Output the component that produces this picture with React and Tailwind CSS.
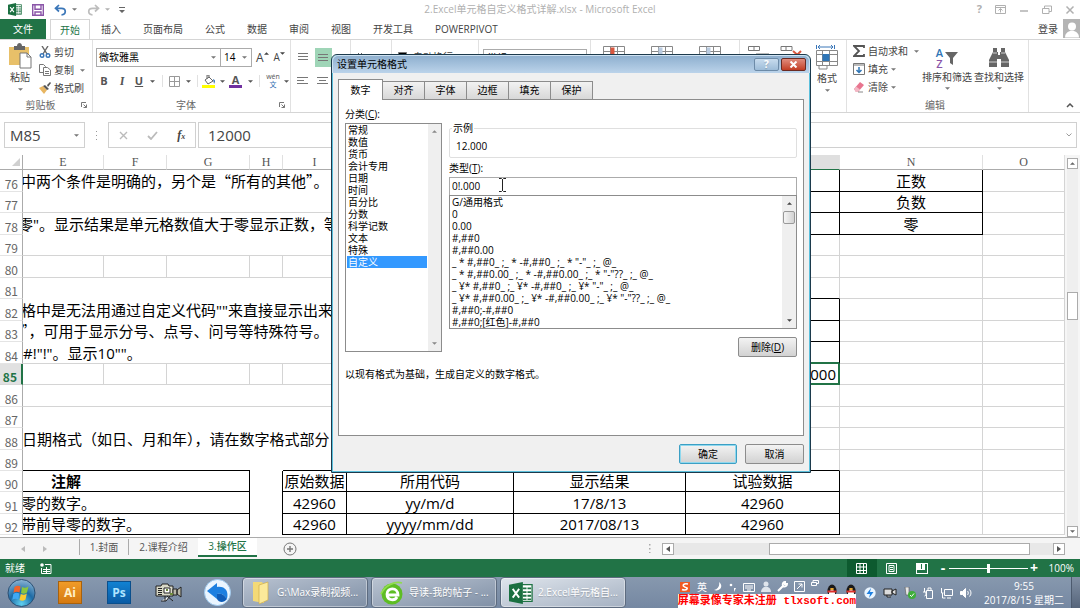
import React, { useState } from 'react';

const Arrow = ({ className = '', up = false }) => (
    <svg className={`h-[3px] w-[5px] shrink-0 ${className}`} viewBox="0 0 6 3" fill="currentColor">
        <path d={up ? 'M0 3h6L3 0z' : 'M0 0h6L3 3z'} />
    </svg>
);

const ExcelLogo = ({ className }) => (
    <svg className={className} viewBox="0 0 26 24">
        <path d="M13 3h12v18H13z" fill="#fff" stroke="#217346" strokeWidth="1.4" />
        <path d="M15 6h4v2h-4zM20 6h4v2h-4zM15 10h4v2h-4zM20 10h4v2h-4zM15 14h4v2h-4zM20 14h4v2h-4zM15 18h4v1.500h-4zM20 18h4v1.500h-4z" fill="#217346" />
        <path d="M0 3L15 0v24L0 21z" fill="#1b7041" />
        <path d="M4 7.500l7 9.500M11 7.500L4 17" stroke="#fff" strokeWidth="2" />
    </svg>
);

const TitleBar = () => (
    <header className="flex h-[19px] items-center text-[#b0b0b0]">
        <div className="flex w-[340px] items-center pl-2">
            <ExcelLogo className="h-[13px] w-[14px]" />
            <button aria-label="保存" className="ml-[10px]">
                <svg className="h-[12px] w-[12px]" viewBox="0 0 12 12" fill="none" stroke="#8a55a8" strokeWidth="1.4">
                    <path d="M.7.7h10.600v10.600H.7zM3 .7v4.600h6V.7M3 11.300V8h6v3.300" />
                </svg>
            </button>
            <button aria-label="撤消" className="ml-[10px] flex items-center">
                <svg className="h-[12px] w-[13px]" viewBox="0 0 13 12" fill="none" stroke="#3a76b8" strokeWidth="1.7">
                    <path d="M5 1L1.500 4.300 5 7.500M2 4.300h5.500c5 0 5 6.500 0 6.500" />
                </svg>
                <Arrow className="ml-[5px] text-[#777]" />
            </button>
            <button aria-label="恢复" className="ml-[10px] flex items-center">
                <svg className="h-[12px] w-[13px]" viewBox="0 0 13 12" fill="none" stroke="#bdbdbd" strokeWidth="1.7">
                    <path d="M8 1l3.500 3.300L8 7.500M11 4.300H5.500c-5 0-5 6.500 0 6.500" />
                </svg>
                <Arrow className="ml-[5px]" />
            </button>
            <button aria-label="自定义快速访问工具栏" className="ml-[9px] text-[#666]">
                <svg className="h-[6px] w-[6px]" viewBox="0 0 6 6" fill="currentColor">
                    <path d="M0 0h6v1H0zM0 3h6L3 6z" />
                </svg>
            </button>
        </div>
        <h1 className="flex-1 text-center text-[10px]">2.Excel单元格自定义格式详解.xlsx - Microsoft Excel</h1>
        <div className="flex w-[340px] items-center justify-end gap-[13px] pr-[5px]">
            <button aria-label="帮助" className="text-[11px] font-bold">?</button>
            <button aria-label="功能区显示选项">
                <svg className="h-[9px] w-[11px]" viewBox="0 0 11 9" fill="none" stroke="currentColor">
                    <path d="M.5.500h10v8H.5zM.5 2.500h10M5.500 7.500V4M3.500 5.500l2-2 2 2" />
                </svg>
            </button>
            <button aria-label="最小化">
                <svg className="h-[10px] w-[10px]" viewBox="0 0 10 10" stroke="currentColor" strokeWidth="1.500"><path d="M1 6h8" /></svg>
            </button>
            <button aria-label="向下还原">
                <svg className="h-[10px] w-[10px]" viewBox="0 0 10 10" fill="none" stroke="currentColor"><path d="M.5 3.500h6.500v5H.5zM2.500 3V1h7v5.500H7" /></svg>
            </button>
            <button aria-label="关闭">
                <svg className="h-[10px] w-[10px]" viewBox="0 0 10 10" stroke="currentColor" strokeWidth="1.500"><path d="M1.500 1.500l7 7M8.500 1.500l-7 7" /></svg>
            </button>
        </div>
    </header>
);

const TABS = ['插入', '页面布局', '公式', '数据', '审阅', '视图', '开发工具', 'POWERPIVOT'];

const RibbonTabs = () => (
    <nav className="flex h-[20px] items-stretch text-[10px] text-[#444]">
        <button className="w-[46px] bg-[#217346] text-white">文件</button>
        <button className="-mb-px ml-1 w-[40px] border border-b-0 border-[#d5d5d5] bg-white text-[#217346]">开始</button>
        {TABS.map((tab) => (
            <button key={tab} className="px-[11px]">{tab}</button>
        ))}
        <button className="mr-[5px] ml-auto">登录</button>
        <div className="mb-px w-[17px] bg-[#b4b4b4]">
            <svg className="h-full w-full" viewBox="0 0 17 18" fill="#fff">
                <circle cx="9" cy="7" r="4" />
                <path d="M2 18c0-9 14-9 14 0z" />
            </svg>
        </div>
    </nav>
);

const Group = ({ label, launcher, className, children }) => (
    <section className={`flex shrink-0 flex-col border-r border-[#e1e1e1] ${className}`}>
        <div className="h-[59px]">{children}</div>
        <div className="flex h-[14px] items-center pr-[5px] text-[10px] text-[#666]">
            <span className="flex-1 text-center">{label}</span>
            {launcher && (
                <svg className="h-[6px] w-[6px]" viewBox="0 0 6 6" fill="none" stroke="#777">
                    <path d="M.5 5V.5H5M2.500 2.500l3 3M5.500 2.500v3h-3" />
                </svg>
            )}
        </div>
    </section>
);

const Lines = ({ d }) => (
    <svg className="h-[12px] w-[12px]" viewBox="0 0 12 12" stroke="#777" strokeWidth="1"><path d={d} /></svg>
);

const CellsIcon = ({ accent = '#b9cbe0' }) => (
    <svg className="h-[16px] w-[22px]" viewBox="0 0 22 16" fill="#fff" stroke="#888">
        <path d="M.5.500h21v15H.5zM.5 5.500h21M.5 10.500h21M7.500 0v16M14.500 0v16" />
        <path d="M7.500 1.500h4v9h-4z" fill={accent} stroke="none" />
    </svg>
);

const Ribbon = () => (
    <div className="flex h-[74px] border-y border-[#d5d5d5] text-[10px] text-[#444]">
        <Group label="剪贴板" launcher className="w-[93px]">
            <div className="flex pt-[3px] pl-[9px]">
                <button className="flex w-[22px] flex-col items-center">
                    <svg className="h-[26px] w-[24px]" viewBox="0 0 24 26">
                        <path d="M1 4h20v18H1z" fill="#e8c069" />
                        <path d="M6 3h3c0-4 5-4 5 0h3v4H6z" fill="#666" />
                        <path d="M12 10h7l4 4v11H12z" fill="#fff" stroke="#777" />
                        <path d="M19 10v4h4" fill="none" stroke="#777" />
                    </svg>
                    <span className="leading-[16px] whitespace-nowrap">粘贴</span>
                    <Arrow className="mt-[3px] text-[#777]" />
                </button>
                <div className="ml-[8px] flex flex-col leading-[18px]">
                    <button className="flex items-center gap-[3px]">
                        <svg className="h-[12px] w-[12px]" viewBox="0 0 12 12" fill="none" strokeWidth="1.400">
                            <path d="M3 0l5 8M9 0L4 8" stroke="#666" />
                            <circle cx="3" cy="9.500" r="1.800" stroke="#3a76b8" />
                            <circle cx="9" cy="9.500" r="1.800" stroke="#3a76b8" />
                        </svg>
                        剪切
                    </button>
                    <button className="flex items-center gap-[3px]">
                        <svg className="h-[12px] w-[12px]" viewBox="0 0 12 12" fill="#fff" stroke="#777">
                            <path d="M.5.500h4l2 2v6h-6z" />
                            <path d="M4.500 3.500h4l3 2.500v5.500h-7zM6 7.500h4M6 9.500h4" />
                        </svg>
                        复制
                        <Arrow className="ml-[3px] text-[#777]" />
                    </button>
                    <button className="flex items-center gap-[3px]">
                        <svg className="h-[12px] w-[12px]" viewBox="0 0 12 12">
                            <path d="M0 6l4-2 4 4-3 4z" fill="#e8b662" />
                            <path d="M4 4l2-1 4 4-2 1zM8 3l3-3 1 1-3 4z" fill="#555" />
                        </svg>
                        格式刷
                    </button>
                </div>
            </div>
        </Group>

        <Group label="字体" launcher className="w-[198px]">
            <div className="flex items-center pt-2 pl-[3px]">
                <button className="flex h-[19px] w-[125px] items-center justify-between border border-[#ababab] pr-1 pl-[2px] text-[10px] text-black">
                    微软雅黑 <Arrow className="text-[#777]" />
                </button>
                <button className="-ml-px flex h-[19px] w-[32px] items-center justify-between border border-[#ababab] pr-1 pl-[3px] text-[10px] text-black">
                    14 <Arrow className="text-[#777]" />
                </button>
                <button aria-label="增大字号" className="ml-1 flex text-[12px]">A<Arrow up className="mt-[3px]" /></button>
                <button aria-label="减小字号" className="ml-[5px] flex text-[10px]">A<Arrow className="mt-[2px]" /></button>
            </div>
            <div className="mt-[3px] flex h-[22px] items-center pl-[5px] text-[#555]">
                <button className="w-[12px] text-[11px] font-bold">B</button>
                <button className="ml-[6px] w-[12px] font-serif text-[12px] font-bold italic">I</button>
                <button className="ml-[5px] w-[12px] text-[11px] font-bold underline">U</button>
                <Arrow className="ml-[5px]" />
                <div className="ml-[7px] h-3 w-px bg-[#e1e1e1]" />
                <svg className="ml-[6px] h-[11px] w-[11px]" viewBox="0 0 11 11" fill="none" stroke="#999"><path d="M.5.500h10v10H.5zM5.500 0v11M0 5.500h11" /></svg>
                <Arrow className="ml-[6px]" />
                <div className="ml-[6px] h-3 w-px bg-[#e1e1e1]" />
                <svg className="ml-[4px] h-[13px] w-[14px]" viewBox="0 0 14 13">
                    <path d="M3 5l4-3 4 4-5 3zM5 4V0h2v3" fill="#fff" stroke="#666" />
                    <path d="M11 4c3 1 2 3 1 5z" fill="#3a76b8" />
                    <path d="M0 10h13v3H0z" fill="#ffff00" />
                </svg>
                <Arrow className="ml-[4px]" />
                <button aria-label="字体颜色" className="ml-[4px] w-[13px] border-b-3 border-[#7030a0] text-[11px] leading-[11px] font-bold">A</button>
                <Arrow className="ml-[6px]" />
                <div className="ml-[6px] h-3 w-px bg-[#e1e1e1]" />
                <button className="ml-[6px] flex w-[14px] flex-col items-center text-[7px] leading-[8px]">
                    <span>wén</span>
                    <span className="text-[#2e6db0]">文</span>
                </button>
                <Arrow className="ml-[4px]" />
            </div>
        </Group>

        <Group label="" className="w-[60px]">
            <div className="grid w-[44px] grid-cols-2 pt-2 pl-[3px]">
                <span className="flex h-[19px] w-[17px] items-center justify-center"><Lines d="M1 1.500h10M1 4.500h10M1 7.500h10" /></span>
                <span className="flex h-[19px] w-[17px] items-center justify-center bg-[#9fd5b7]"><Lines d="M1 2.500h10M1 5.500h10M1 8.500h10" /></span>
                <span className="mt-[5px] flex h-[19px] w-[17px] items-center justify-center"><Lines d="M0 1.500h11M0 4.500h7M0 7.500h11" /></span>
                <span className="mt-[5px] flex h-[19px] w-[17px] items-center justify-center"><Lines d="M0 1.500h11M2 4.500h7M0 7.500h11" /></span>
            </div>
        </Group>
        <Group label="" className="w-[41px]">
            <svg className="mt-[12px] ml-[6px] h-[9px] w-[9px]" viewBox="0 0 9 9" fill="none" stroke="#666"><path d="M1 1l7 7M5 1L1 5" /></svg>
        </Group>

        <Group label="对齐方式" className="w-[87px]">
            <div className="flex items-center gap-[3px] pt-[10px] pl-[6px]"><Lines d="M.5.500h8v10H.5zM2 3.500h5" />自动换行</div>
        </Group>
        <Group label="数字" className="w-[112px]">
            <button className="mt-[9px] ml-1 flex h-[19px] w-[104px] items-center border border-[#ababab] pl-[3px] text-black">常规</button>
        </Group>
        <Group label="样式" className="flex-1">
            <div className="flex gap-[26px] pt-[6px] pl-3">
                <CellsIcon accent="#d9573f" />
                <CellsIcon />
                <CellsIcon />
            </div>
        </Group>
        <Group label="" className="w-[107px]">
            <div className="flex pt-[4px] pl-[8px]">
                <svg className="mt-[2px] h-[20px] w-[60px]" viewBox="0 0 60 20" fill="none" stroke="#777">
                    <path d="M.5.500h11v4H.5zM6 0v4M8 8h13v4H8zM33 .500h11v4H33zM38 0v4" />
                    <path d="M45 5l8 7M53 5l-7 7" stroke="#d9573f" strokeWidth="2" />
                </svg>
                <button className="ml-[8px] flex w-[22px] flex-col items-center">
                    <svg className="h-[26px] w-[22px]" viewBox="0 0 22 26" fill="#fff" stroke="#888">
                        <path d="M.5 1v4M18.500 1v4M2 3h15M4 1L2 3l2 2M15 1l2 2-2 2" stroke="#3a76b8" fill="none" />
                        <path d="M.5 6.500h21v15H.5zM.5 10.500h21M.5 17.500h21M6.500 6v15M13.500 6v15M3 22v3h8v-3" />
                        <path d="M6.500 10h7v7h-7z" fill="#2e75b6" stroke="none" />
                    </svg>
                    <span className="leading-[16px] whitespace-nowrap">格式</span>
                    <Arrow className="mt-[3px] text-[#777]" />
                </button>
            </div>
        </Group>
        <Group label="编辑" className="w-[182px]">
            <div className="flex pt-[2px] pl-[6px]">
                <div className="flex w-[68px] flex-col leading-[18px]">
                    <button className="flex items-center gap-[3px] whitespace-nowrap">
                        <svg className="h-[12px] w-[12px] shrink-0" viewBox="0 0 12 12" fill="none" stroke="#555" strokeWidth="1.800"><path d="M11 3V1H1l5 5-5 5h10V9" /></svg>
                        自动求和 <Arrow className="ml-[3px] text-[#777]" />
                    </button>
                    <button className="flex items-center gap-[3px]">
                        <svg className="h-[12px] w-[12px]" viewBox="0 0 12 12" fill="none" stroke="#777"><path d="M.5.500h11v11H.5zM.5 2h11" /><path d="M6 4v5M3.500 7L6 9.500 8.500 7" stroke="#2e75b6" strokeWidth="1.500" /></svg>
                        填充 <Arrow className="text-[#777]" />
                    </button>
                    <button className="flex items-center gap-[3px]">
                        <svg className="h-[12px] w-[12px]" viewBox="0 0 12 12"><path d="M1 8l6-7 4 3-6 7H3z" fill="#e8758f" /><path d="M1 8l2-2.500 4 3L5 11H3z" fill="#f3b8c5" /><path d="M5 11h5" stroke="#888" /></svg>
                        清除 <Arrow className="text-[#777]" />
                    </button>
                </div>
                <button className="flex w-[52px] flex-col items-center pt-[5px]">
                    <span className="flex h-[22px] items-center text-[11px] leading-[11px] font-semibold">
                        <span className="flex flex-col"><span className="text-[#2e75b6]">A</span><span className="text-[#8a55a8]">Z</span></span>
                        <svg className="ml-[2px] h-[13px] w-[13px]" viewBox="0 0 13 13" fill="#666"><path d="M0 0h13L8 6v7l-3-2V6z" /></svg>
                    </span>
                    <span className="leading-[16px] whitespace-nowrap">排序和筛选</span>
                    <Arrow className="mt-[2px] text-[#777]" />
                </button>
                <button className="flex w-[52px] flex-col items-center pt-[5px]">
                    <svg className="mb-px h-[21px] w-[22px]" viewBox="0 0 22 21" fill="#666">
                        <path d="M5 1h4v4h1v3h2V5h1V1h4v4l4 8v7h-8v-8H9v8H1v-7l4-8z" />
                        <path d="M5 6h4M13 6h4M1 15h8M13 15h8" stroke="#fff" strokeWidth=".7" />
                    </svg>
                    <span className="leading-[16px] whitespace-nowrap">查找和选择</span>
                    <Arrow className="mt-[2px] text-[#777]" />
                </button>
            </div>
        </Group>
        <div className="flex w-[51px] shrink-0 items-end justify-end pr-[6px] pb-1">
            <svg className="h-[5px] w-[8px]" viewBox="0 0 8 5" fill="none" stroke="#555" strokeWidth="1.500"><path d="M1 4l3-3 3 3" /></svg>
        </div>
    </div>
);

const FormulaBar = () => (
    <div className="flex h-[42px] items-start pt-[9px] pr-[3px] pl-1 text-[15px] text-[#444]">
        <label className="flex h-[26px] w-[81px] items-center border border-[#d0d0d0] pr-[5px]">
            <input aria-label="名称框" className="w-full min-w-0 pl-[5px] outline-none" defaultValue="M85" />
            <Arrow className="text-[#777]" />
        </label>
        <svg className="mx-[9px] h-[26px] w-[5px]" viewBox="0 0 5 26" fill="#999"><path d="M2 9h1v1H2zM2 13h1v1H2zM2 17h1v1H2z" /></svg>
        <div className="flex h-[26px] w-[88px] items-center justify-around border border-[#d0d0d0]">
            <svg className="h-[9px] w-[9px]" viewBox="0 0 9 9" stroke="#bbb" strokeWidth="1.400"><path d="M1 1l7 7M8 1L1 8" /></svg>
            <svg className="h-[9px] w-[11px]" viewBox="0 0 11 9" fill="none" stroke="#bbb" strokeWidth="1.800"><path d="M1 5l3 3 6-7" /></svg>
            <button className="font-[Liberation_Serif] text-[12px] font-bold italic">f<span className="text-[8px]">x</span></button>
        </div>
        <div className="ml-[2px] flex h-[26px] flex-1 items-center border border-[#d0d0d0] pr-1">
            <input aria-label="编辑栏" className="w-full pl-[9px] outline-none" defaultValue="12000" />
            <svg className="h-[4px] w-[6px]" viewBox="0 0 6 4" fill="none" stroke="#999"><path d="M.5.500L3 3 5.500.500" /></svg>
        </div>
    </div>
);

const COLUMNS = ['E', 'F', 'G', 'H', 'I', 'J', 'L', 'M', 'N', 'O'];

const RowHead = ({ n }) => (
    <th
        className={`border-r border-b p-0 pr-1 text-right align-bottom font-[Noto_Sans_CJK_SC] text-[12px] leading-[15px] ${
            n === 85
                ? 'border-r-2 border-r-[#217346] border-b-[#d8d8d8] bg-[#e1e1e1] font-bold text-[#217346]'
                : 'border-r-[#ababab] border-b-[#e4e4e4] font-normal text-[#666]'
        }`}
    >
        {n}
    </th>
);

const black = 'border-r border-b border-black';
const grey = 'border-r border-b border-[#d4d4d4]';

// long notes run over the cells to their right
const Note = ({ text, line, cjk, shift = '-ml-[2px]' }) => (
    <td colSpan={7} className={`overflow-hidden border-b p-0 whitespace-nowrap ${line ? 'border-[#d4d4d4]' : 'border-transparent'}`}>
        <div className={`${shift} ${cjk ? 'font-[Noto_Sans_CJK_SC]' : ''}`}>{text}</div>
    </td>
);

const NOTE_ROWS = [
    { n: 76, text: '中两个条件是明确的，另个是“所有的其他”。', cjk: true, m: black, label: '正数' },
    { n: 77, text: '', line: true, m: black, label: '负数' },
    { n: 78, text: '零"。显示结果是单元格数值大于零显示正数，等', shift: '-ml-[5px]', m: black, label: '零' },
    { n: 79, text: '', line: true, m: grey },
    { n: 80, cells: true, m: grey },
    { n: 81, text: '', m: 'border-r border-b border-r-[#d4d4d4] border-b-black' },
    { n: 82, text: '格中是无法用通过自定义代码""来直接显示出来', m: black },
    { n: 83, text: '”，可用于显示分号、点号、问号等特殊符号。', cjk: true, m: black },
    { n: 84, text: '#!"!"。显示10""。', shift: 'ml-0', line: true, m: 'border-r border-r-black border-b-2 border-b-[#217346]' },
    { n: 85, cells: true, m: 'border-r-2 border-b-2 border-[#217346]', value: '12000' },
    { n: 86, text: '', line: true, m: grey },
    { n: 87, text: '', m: grey },
    { n: 88, text: '日期格式（如日、月和年），请在数字格式部分', shift: '-ml-px', m: grey },
    { n: 89, last: true, m: 'border-r border-b border-r-[#d4d4d4] border-b-black' },
];

const DATE_ROWS = [
    { n: 90, note: '注解', cells: ['原始数据', '所用代码', '显示结果', '试验数据'] },
    { n: 91, note: '零的数字。', cells: ['42960', 'yy/m/d', '17/8/13', '42960'] },
    { n: 92, note: '带前导零的数字。', cells: ['42960', 'yyyy/mm/dd', '2017/08/13', '42960'] },
];

const Sheet = () => (
    <main className="flex h-[382px] overflow-hidden">
        <div className="min-w-0 flex-1">
            <table className="w-full table-fixed border-separate border-spacing-0 text-[15px] leading-[18px] text-black">
                <colgroup>
                    <col className="w-[23px]" />
                    <col className="w-[81px]" />
                    <col className="w-[63px]" />
                    <col className="w-[83px]" />
                    <col className="w-[33px]" />
                    <col className="w-[64px]" />
                    <col className="w-[167px]" />
                    <col className="w-[172px]" />
                    <col className="w-[154px]" />
                    <col className="w-[143px]" />
                    <col />
                </colgroup>
                <thead>
                    <tr className="h-[15px] font-[Liberation_Serif] text-[12px] leading-[14px] text-[#555]">
                        <th className="border-r border-b border-[#ababab] p-0">
                            <svg className="mr-[2px] ml-auto h-[8px] w-[8px]" viewBox="0 0 8 8" fill="#d0d0d0"><path d="M8 0v8H0z" /></svg>
                        </th>
                        {COLUMNS.map((c) => (
                            <th
                                key={c}
                                className={`border-r border-b p-0 font-normal ${
                                    c === 'M' ? 'border-r-[#e0e0e0] border-b-[#217346] bg-[#dfdfdf]' : 'border-r-[#e0e0e0] border-b-[#ababab]'
                                }`}
                            >
                                {c}
                            </th>
                        ))}
                    </tr>
                </thead>
                <tbody>
                    {NOTE_ROWS.map((r, i) => (
                        <tr key={r.n} className={i % 2 ? 'h-[21px]' : 'h-[22px]'}>
                            <RowHead n={r.n} />
                            {r.cells && [0, 1, 2, 3, 4, 5, 6].map((k) => <td key={k} className={grey} />)}
                            {r.last && (
                                <>
                                    <td colSpan={3} className="border-b border-black" />
                                    <td />
                                    <td colSpan={3} className="border-b border-black" />
                                </>
                            )}
                            {!r.cells && !r.last && <Note {...r} />}
                            <td className={`p-0 pr-[2px] text-right ${r.m}`}>{r.value}</td>
                            <td className={`p-0 text-center ${r.label ? black : grey}`}>{r.label}</td>
                            <td className={grey} />
                        </tr>
                    ))}
                    {DATE_ROWS.map((r, i) => (
                        <tr key={r.n} className={i % 2 ? 'h-[22px]' : 'h-[21px]'}>
                            <RowHead n={r.n} />
                            <td colSpan={3} className={`overflow-hidden p-0 whitespace-nowrap ${black}`}>
                                <div className={i === 0 ? 'pl-[28px] font-bold' : '-ml-[2px]'}>{r.note}</div>
                            </td>
                            <td className="border-r border-black" />
                            {r.cells.map((c, k) => (
                                <td key={k} className={`p-0 text-center whitespace-nowrap ${black}`}>{c}</td>
                            ))}
                            <td className={grey} />
                            <td className={grey} />
                        </tr>
                    ))}
                </tbody>
            </table>
        </div>
        <div className="flex w-[15px] flex-col items-center bg-[#f6f6f6] pt-[3px]">
            <button aria-label="向上滚动" className="flex h-[11px] w-[11px] items-center justify-center border border-[#ababab] bg-white text-[#666]"><Arrow up /></button>
            <div className="flex w-[11px] flex-1 flex-col bg-[#efefef] pt-[123px]">
                <div className="h-[28px] border border-[#ababab] bg-white" />
            </div>
            <button aria-label="向下滚动" className="flex h-[11px] w-[11px] items-center justify-center border border-[#ababab] bg-white text-[#666]"><Arrow /></button>
        </div>
    </main>
);

const SheetTabs = () => (
    <div className="flex h-[22px] border-t border-[#ababab] bg-[#f5f5f5] text-[10px] text-[#555]">
        <div className="flex w-[79px] items-center gap-[18px] pl-[21px] text-[#bbb]">
            <svg className="h-[6px] w-[4px]" viewBox="0 0 4 6" fill="currentColor"><path d="M4 0v6L0 3z" /></svg>
            <svg className="h-[6px] w-[4px]" viewBox="0 0 4 6" fill="currentColor"><path d="M0 0v6l4-3z" /></svg>
        </div>
        <button className="mt-px mb-1 w-[50px] border-x border-[#ababab]">1.封面</button>
        <button className="mt-px mb-1 w-[69px]">2.课程介绍</button>
        <button className="mb-[2px] w-[59px] border-b-2 border-[#217346] bg-white font-medium text-[#217346]">3.操作区</button>
        <button aria-label="新工作表" className="ml-[26px]">
            <svg className="h-[14px] w-[14px]" viewBox="0 0 14 14" fill="none" stroke="#777"><circle cx="7" cy="7" r="6" /><path d="M7 4v6M4 7h6" strokeWidth="1.400" /></svg>
        </button>
        <div className="mr-[15px] ml-auto flex w-[416px] items-center">
            <svg className="mr-[10px] h-[9px] w-[3px]" viewBox="0 0 3 9" fill="#aaa"><path d="M0 0h1.500v1.500H0zM0 4h1.500v1.500H0zM0 8h1.500v1.500H0z" /></svg>
            <button aria-label="向左滚动" className="flex h-[12px] w-[12px] items-center justify-center border border-[#ababab] bg-white">
                <svg className="h-[6px] w-[4px]" viewBox="0 0 4 6" fill="#555"><path d="M4 0v6L0 3z" /></svg>
            </button>
            <div className="flex h-[12px] flex-1 bg-[#e8e8e8] pl-[95px]">
                <div className="w-[261px] border border-[#ababab] bg-white" />
            </div>
            <button aria-label="向右滚动" className="flex h-[12px] w-[12px] items-center justify-center border border-[#ababab] bg-white">
                <svg className="h-[6px] w-[4px]" viewBox="0 0 4 6" fill="#555"><path d="M0 0v6l4-3z" /></svg>
            </button>
        </div>
    </div>
);

const StatusBar = () => (
    <footer className="flex h-[18px] items-center bg-[#217346] pr-[6px] pl-[5px] text-[10px] text-white">
        <span>就绪</span>
        <svg className="ml-[15px] h-[11px] w-[12px]" viewBox="0 0 12 11" fill="none" stroke="#fff">
            <path d="M5 1.500h6v9H1.500V5M3 6.500h7M3 8.500h7M6.500 4v6" />
            <circle cx="2" cy="2" r="1.800" fill="#fff" stroke="none" />
        </svg>
        <div className="ml-auto flex items-center">
            <button aria-label="普通" className="flex h-[18px] w-[30px] items-center justify-center bg-[#0d5a2f]">
                <svg className="h-[11px] w-[11px]" viewBox="0 0 11 11" fill="none" stroke="#fff"><path d="M.5.500h10v10H.5zM4 0v11M7.500 0v11M0 4h11M0 7.500h11" /></svg>
            </button>
            <button aria-label="页面布局" className="ml-[9px]">
                <svg className="h-[11px] w-[11px]" viewBox="0 0 11 11" fill="none" stroke="#fff"><path d="M.5.500h10v10H.5zM3 2.500h5v6H3zM4 4.500h3M4 6.500h3" /></svg>
            </button>
            <button aria-label="分页预览" className="ml-[19px]">
                <svg className="h-[11px] w-[12px]" viewBox="0 0 12 11" fill="#fff"><path d="M0 0h12v11H0zM1 7v3h10V1H9v6z" fillRule="evenodd" /><path d="M5 1h1v5H5z" fill="#217346" /></svg>
            </button>
            <button className="ml-[12px] w-[7px] text-[14px] leading-[14px] font-bold">-</button>
            <div className="ml-[2px] flex h-[9px] w-[79px] items-center justify-center bg-[linear-gradient(white,white)] bg-[length:100%_1px] bg-center bg-no-repeat">
                <div className="h-[9px] w-[3px] bg-white" />
            </div>
            <button className="ml-[2px] w-[9px] text-[14px] leading-[14px] font-bold">+</button>
            <span className="ml-[10px]">100%</span>
        </div>
    </footer>
);

const TaskButton = ({ icon, children, active }) => (
    <button
        className={`flex h-[31px] w-[126px] items-center gap-[5px] rounded-sm border border-[#5d6b7f] pl-[8px] text-[10px] text-white inset-ring inset-ring-white/40 ${
            active ? 'bg-linear-to-br from-[#dfe5ec] to-[#a5b1c2]' : 'bg-linear-to-br from-[#b9c3d1] to-[#8090a6]'
        }`}
    >
        {icon}
        <span className="truncate text-shadow-xs">{children}</span>
    </button>
);

const Taskbar = () => (
    <div className="relative flex h-[31px] items-center bg-linear-to-b from-[#8798ae] to-[#7588a2] text-white">
        <button aria-label="开始" className="ml-[7px]">
            <svg className="h-[28px] w-[29px]" viewBox="0 0 28 28">
                <defs>
                    <radialGradient id="orb" cx=".5" cy=".9" r=".9">
                        <stop offset="0" stopColor="#5fd0f0" />
                        <stop offset=".5" stopColor="#1d6ba6" />
                        <stop offset="1" stopColor="#8fb6d4" />
                    </radialGradient>
                </defs>
                <circle cx="14" cy="14" r="13.500" fill="url(#orb)" stroke="#2b4f72" />
                <path d="M7 8c2-1.500 4-1.500 6-.5l-1 6c-2-1-4-1-6 .5z" fill="#f0642c" />
                <path d="M14.500 8c2 1 4 1 6.500-.5l-1.500 6c-2 1.500-4 1.500-6 .5z" fill="#8cc63f" />
                <path d="M5.800 15c2-1.500 4-1.500 6-.5l-1 6c-2-1-4-1-6 .5z" fill="#3fa9f5" />
                <path d="M13.300 15c2 1 4 1 6-.5l-1.300 6c-2 1.500-4 1.500-6 .5z" fill="#fccb2f" />
            </svg>
        </button>
        <button className="ml-[22px] h-[23px] w-[24px] border border-[#a8610c] bg-linear-to-b from-[#f09b28] to-[#d57a10] text-[12px] leading-[20px] font-bold text-[#fff0c8]">Ai</button>
        <button className="ml-[25px] h-[23px] w-[24px] border border-[#0a4f8c] bg-linear-to-b from-[#1182d2] to-[#0a5ba5] text-[12px] leading-[20px] font-bold text-[#aee4ff]">Ps</button>
        <button aria-label="录像" className="ml-[24px]">
            <svg className="h-[20px] w-[27px]" viewBox="0 0 27 20" stroke="#222">
                <path d="M1 3h5l1-2h6l1 2h4v10H1z" fill="#d9d9c8" />
                <path d="M18 6h4v6h-4zM22 7l4-3v10l-4-3z" fill="#b8b8a8" />
                <path d="M3 5.500h4M3 7.500h4M3 9.500h4M3 11.500h4M10 13v5M6 18h5l4-5M12 13l6 5M9 5h6v5H9z" fill="#fff" />
                <path d="M11 6h2v2h-2zM15 10h3v2h-3z" fill="#6d8a3a" stroke="none" />
            </svg>
        </button>
        <button aria-label="迅雷" className="ml-[22px]">
            <svg className="h-[27px] w-[27px]" viewBox="0 0 27 27">
                <circle cx="13.500" cy="13.500" r="13" fill="#eaf5ff" stroke="#9ec9ee" />
                <path d="M3 12L13 4v4c8-1 12 4 10 12-3-5-6-6-10-5v5z" fill="#1d7fe0" />
                <path d="M13 15c4-1 7 0 10 5-3 4-8 4-10 0z" fill="#0f5cb8" />
            </svg>
        </button>
        <div className="ml-[11px] flex gap-[3px]">
            <TaskButton
                icon={
                    <svg className="h-[25px] w-[21px] shrink-0" viewBox="0 0 21 25">
                        <path d="M2 2h9l2 3v18l-11-2z" fill="#f3d976" />
                        <path d="M8 5l9-3v18l-9 4z" fill="#fbe99a" stroke="#cfae4b" strokeWidth=".7" />
                    </svg>
                }
            >
                G:\Max录制视频...
            </TaskButton>
            <TaskButton
                icon={
                    <svg className="h-[24px] w-[24px] shrink-0" viewBox="0 0 24 24">
                        <circle cx="12" cy="13" r="10.500" fill="#5ebd24" />
                        <path d="M7 14h11c0-8-11-8-11-1 0 7 8 7 10 3" fill="none" stroke="#fff" strokeWidth="2.800" />
                        <path d="M1 13C5 4 15 0 22 2" fill="none" stroke="#8fdc4d" strokeWidth="1.800" />
                    </svg>
                }
            >
                导读-我的帖子 - ...
            </TaskButton>
            <TaskButton active icon={<ExcelLogo className="h-[24px] w-[24px] shrink-0" />}>
                2.Excel单元格自...
            </TaskButton>
        </div>

        <div className="ml-auto flex items-center gap-[7px]">
            <div className="mb-3 flex items-center gap-[6px]">
                <svg className="h-[12px] w-[12px]" viewBox="0 0 12 12"><path d="M1 1h10v10H1z" fill="#f05a23" /><path d="M9 3C5 2 3 4 5 5.500s4 1 3 2.500-4 1-5 .500" fill="none" stroke="#fff" strokeWidth="1.500" /></svg>
                <span className="text-[10px] leading-[12px]">英</span>
                <svg className="h-[10px] w-[10px]" viewBox="0 0 10 10" fill="#fff"><path d="M6 0c5 4 1 10-5 8 4-1 6-4 5-8z" /></svg>
                <svg className="h-[10px] w-[8px]" viewBox="0 0 8 10" fill="#fff"><circle cx="2" cy="3" r="1.300" /><path d="M5 6h2L5 10z" /></svg>
                <svg className="h-[10px] w-[12px]" viewBox="0 0 12 10" fill="none" stroke="#fff"><path d="M.5 1.500h11v8H.5zM2 4h8M2 6h8M4 8h4" /></svg>
                <svg className="h-[11px] w-[10px]" viewBox="0 0 10 11" fill="#dfe5ec"><circle cx="5" cy="3" r="2.500" /><path d="M0 11c0-7 10-7 10 0z" /></svg>
                <svg className="h-[11px] w-[11px]" viewBox="0 0 11 11" fill="none" stroke="#fff" strokeWidth="2"><path d="M1 10l5-5M6 5c-1-3 1-4 2-4v2h2c0 2-2 3-4 2z" /></svg>
                <svg className="h-[11px] w-[11px]" viewBox="0 0 11 11" fill="none" stroke="#fff"><path d="M.5.500h10v10H.5zM3 8l5-5M4.500 3H8v3.500" /></svg>
                <svg className="mb-2 h-[6px] w-[8px]" viewBox="0 0 8 6" fill="none" stroke="#fff"><path d="M.5 2.500h5v3h-5zM2 2V.500h5.500v3H6" /></svg>
            </div>
            {[0, 1].map((k) => (
                <svg key={k} className="mb-1 h-[14px] w-[12px]" viewBox="0 0 11 14">
                    <ellipse cx="5.500" cy="7" rx="4.500" ry="6.500" fill="#1a1a1a" />
                    <ellipse cx="5.500" cy="9.500" rx="3" ry="3.500" fill="#fff" />
                    <path d="M1 6.500h9v2H1z" fill="#e0312a" />
                    <ellipse cx="5.500" cy="5" rx="2" ry="1" fill="#f9b233" />
                </svg>
            ))}
            <svg className="h-[12px] w-[12px]" viewBox="0 0 12 12"><circle cx="6" cy="6" r="5.700" fill="#eaf5ff" /><path d="M7 1L2.500 7H6l-1 4 4.500-6H6z" fill="#1d7fe0" /></svg>
            <svg className="h-[11px] w-[14px]" viewBox="0 0 14 11" stroke="#222"><path d="M1 2h8v6H1zM9 4l4-2v6L9 6zM4 8v2h4" fill="#ddd" /></svg>
            <svg className="h-[12px] w-[12px]" viewBox="0 0 12 12"><path d="M1 0h4v8H2z" fill="#e6e6e6" stroke="#555" strokeWidth=".6" /><circle cx="8" cy="8" r="4" fill="#3fae3a" /><path d="M6 8l1.500 1.500L10 6.500" fill="none" stroke="#fff" /></svg>
            <svg className="h-[12px] w-[11px]" viewBox="0 0 11 12" fill="none" stroke="#fff"><path d="M3.500 3.500h6v8h-6zM5 3V1h3v2M1.500 1v4M0 5h3v3l-1.500 1" /></svg>
            <svg className="h-[12px] w-[12px]" viewBox="0 0 12 12" fill="none" stroke="#fff"><path d="M3.500 2.500h8v6h-8zM6 11h4M.5 1v5h2M1.500 6v5h3" /></svg>
            <svg className="h-[12px] w-[12px]" viewBox="0 0 12 12" fill="none" stroke="#fff"><path d="M.5 4.500h2l3-3v9l-3-3h-2z" fill="#fff" /><path d="M7.500 4c1 1 1 3 0 4M9.500 2.500c2 2 2 5 0 7" /></svg>
            <time className="ml-[3px] w-[84px] text-center text-[10px] leading-[14px] whitespace-nowrap">9:55<br />2017/8/15 星期二</time>
        </div>
        <button aria-label="显示桌面" className="ml-[5px] h-[31px] w-[9px] border-l border-[#4c5a6e] bg-linear-to-b from-[#8190a4] to-[#56657b]" />

        <p className="absolute right-[224px] bottom-0 bg-white font-[Liberation_Mono,Noto_Sans_CJK_SC] text-[11px] leading-[14px] font-bold whitespace-nowrap text-[#f00]">
            屏幕录像专家未注册 tlxsoft.com
        </p>
    </div>
);

const CATEGORIES = ['常规', '数值', '货币', '会计专用', '日期', '时间', '百分比', '分数', '科学记数', '文本', '特殊', '自定义'];

const FORMATS = [
    'G/通用格式',
    '0',
    '0.00',
    '#,##0',
    '#,##0.00',
    '_ * #,##0_ ;_ * -#,##0_ ;_ * "-"_ ;_ @_ ',
    '_ * #,##0.00_ ;_ * -#,##0.00_ ;_ * "-"??_ ;_ @_ ',
    '_ ¥* #,##0_ ;_ ¥* -#,##0_ ;_ ¥* "-"_ ;_ @_ ',
    '_ ¥* #,##0.00_ ;_ ¥* -#,##0.00_ ;_ ¥* "-"??_ ;_ @_ ',
    '#,##0;-#,##0',
    '#,##0;[红色]-#,##0',
];

const DIALOG_TABS = ['对齐', '字体', '边框', '填充', '保护'];

const dialogButton = 'h-[20px] rounded-xs border bg-linear-to-b from-[#f3f3f3] to-[#d2d2d2]';

const FormatDialog = () => {
    const [category, setCategory] = useState('自定义');
    const [type, setType] = useState('0!.000');

    return (
        <div
            role="dialog"
            aria-label="设置单元格格式"
            className="absolute top-[54px] left-[331px] flex w-[480px] flex-col rounded-t-md border border-[#1c3a4c] bg-[#f0f0f0] text-[10px] text-black inset-ring inset-ring-[#5cc0dc]"
        >
            <div className="flex h-[18px] items-center rounded-t-md border-x border-t border-[#cfe2f2] bg-linear-to-b from-[#8fb0cf] to-[#bbd3ea] pr-[3px] pl-1">
                <h2 className="flex-1">设置单元格格式</h2>
                <button aria-label="帮助" className="h-[13px] w-[25px] rounded-xs border border-[#6d8ba8] bg-linear-to-b from-[#c8dcee] to-[#9dbcd8] text-[10px] leading-[11px] font-bold text-white text-shadow-sm">?</button>
                <button aria-label="关闭" className="ml-[2px] flex h-[13px] w-[25px] items-center justify-center rounded-xs border border-[#6b2a22] bg-linear-to-b from-[#e08b7c] to-[#c23c22]">
                    <svg className="h-[7px] w-[9px]" viewBox="0 0 9 7" stroke="#fff" strokeWidth="2"><path d="M1.500.500l6 6M7.500.500l-6 6" /></svg>
                </button>
            </div>

            <div className="px-[6px] pt-[6px]">
                <div role="tablist" className="flex h-[20px] items-end">
                    <button role="tab" aria-selected="true" className="z-10 -mb-px h-[21px] w-[45px] border border-b-0 border-[#8c8c8c] bg-white">数字</button>
                    {DIALOG_TABS.map((tab) => (
                        <button role="tab" key={tab} className="h-[18px] w-[42px] border border-b-0 border-l-0 border-[#8c8c8c] bg-linear-to-b from-[#f2f2f2] to-[#d8d8d8]">
                            {tab}
                        </button>
                    ))}
                </div>

                <div className="h-[337px] border border-[#8c8c8c] bg-white px-[6px] pt-[7px]">
                    <div className="flex gap-[7px]">
                        <div className="w-[97px] shrink-0">
                            <div id="category" className="h-[16px] leading-[14px]">分类(<u>C</u>):</div>
                            <div className="flex h-[229px] border border-[#8c8c8c]">
                                <ul role="listbox" aria-labelledby="category" className="flex-1 pl-px leading-[12px]">
                                    {CATEGORIES.map((c) => (
                                        <li
                                            key={c}
                                            role="option"
                                            aria-selected={c === category}
                                            onClick={() => setCategory(c)}
                                            className={`pl-px ${c === category ? 'bg-[#3399ff] text-white' : ''}`}
                                        >
                                            {c}
                                        </li>
                                    ))}
                                </ul>
                                <div className="ml-px flex w-[13px] flex-col items-center justify-between bg-[#efefef] py-[6px] text-[#888]">
                                    <Arrow up />
                                    <Arrow />
                                </div>
                            </div>
                        </div>

                        <div className="min-w-0 flex-1 pt-[14px]">
                            <fieldset className="h-[37px] rounded-xs border border-[#dfdfdf] px-[6px]">
                                <legend className="-ml-[4px] px-px leading-[14px]">示例</legend>
                                <output className="block pt-[4px] leading-[14px]">12.000</output>
                            </fieldset>
                            <label htmlFor="type" className="mt-[3px] block h-[16px] leading-[14px]">类型(<u>T</u>):</label>
                            <input
                                id="type"
                                value={type}
                                onChange={(e) => setType(e.target.value)}
                                className="block h-[18px] w-full border border-b-0 border-[#ababab] pb-[2px] pl-[2px] outline-none"
                            />
                            <div className="flex h-[134px] border border-[#8c8c8c]">
                                <ul role="listbox" aria-label="类型" className="flex-1 pl-[2px] leading-[12px] whitespace-pre">
                                    {FORMATS.map((f) => (
                                        <li key={f} role="option" aria-selected="false" onClick={() => setType(f)}>{f}</li>
                                    ))}
                                </ul>
                                <div className="flex w-[14px] flex-col items-center bg-[#efefef] py-[6px] text-[#444]">
                                    <Arrow up />
                                    <div className="mt-[6px] h-[13px] w-[12px] rounded-xs border border-[#999] bg-linear-to-r from-[#f5f5f5] to-[#d2d2d2]" />
                                    <Arrow className="mt-auto" />
                                </div>
                            </div>
                            <div className="mt-[8px] flex justify-end">
                                <button className={`w-[59px] border-[#8c8c8c] ${dialogButton}`}>删除(<u>D</u>)</button>
                            </div>
                        </div>
                    </div>
                    <p className="mt-[10px] leading-[14px]">以现有格式为基础，生成自定义的数字格式。</p>
                </div>

                <div className="flex h-[36px] items-center justify-end gap-[8px]">
                    <button className={`w-[58px] border-[#3c9fc4] inset-ring inset-ring-[#8fd8ee] ${dialogButton}`}>确定</button>
                    <button className={`w-[59px] border-[#8c8c8c] ${dialogButton}`}>取消</button>
                </div>
            </div>

            <svg className="absolute top-[123px] left-[167px] h-[14px] w-[7px]" viewBox="0 0 7 14" fill="none" stroke="#222">
                <path d="M0 .500h2.500l1 1 1-1H7M3.500 1v12M0 13.500h2.500l1-1 1 1H7" />
            </svg>
        </div>
    );
};

const App = () => {
    return (
        <div className="relative flex min-h-screen flex-col overflow-hidden bg-white font-[Open_Sans,Noto_Sans_CJK_SC,sans-serif]">
            <TitleBar />
            <RibbonTabs />
            <Ribbon />
            <FormulaBar />
            <Sheet />
            <SheetTabs />
            <StatusBar />
            <Taskbar />
            <FormatDialog />
        </div>
    );
};

export default App;
